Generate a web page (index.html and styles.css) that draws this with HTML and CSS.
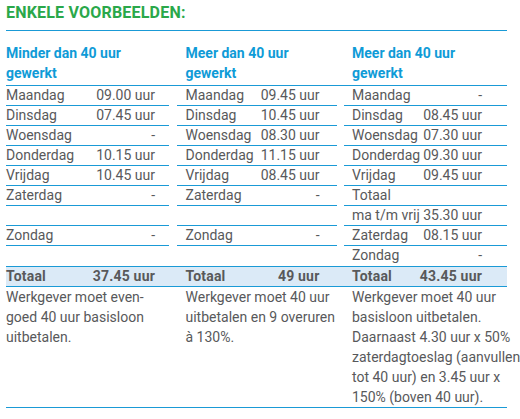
FILE: index.html
```html
<!DOCTYPE html>
<html lang="nl">
<head>
<meta charset="utf-8">
<title>Enkele voorbeelden</title>
<link rel="stylesheet" href="styles.css">
</head>
<body>
<div class="page">
  <h1 class="title">ENKELE VOORBEELDEN:</h1>
  <div class="table">
    <div class="thead grid">
      <div class="th c1">Minder dan 40 uur<br>gewerkt</div>
      <div class="th c2">Meer dan 40 uur<br>gewerkt</div>
      <div class="th c3">Meer dan 40 uur<br>gewerkt</div>
    </div>
    <div class="tbody grid">
      <div class="col c1">
        <div class="row"><span>Maandag</span><span>09.00 uur</span></div>
        <div class="row"><span>Dinsdag</span><span>07.45 uur</span></div>
        <div class="row"><span>Woensdag</span><span>-</span></div>
        <div class="row"><span>Donderdag</span><span>10.15 uur</span></div>
        <div class="row"><span>Vrijdag</span><span>10.45 uur</span></div>
        <div class="row"><span>Zaterdag</span><span>-</span></div>
        <div class="row"><span></span><span></span></div>
        <div class="row"><span>Zondag</span><span>-</span></div>
      </div>
      <div class="col c2">
        <div class="row"><span>Maandag</span><span>09.45 uur</span></div>
        <div class="row"><span>Dinsdag</span><span>10.45 uur</span></div>
        <div class="row"><span>Woensdag</span><span>08.30 uur</span></div>
        <div class="row"><span>Donderdag</span><span>11.15 uur</span></div>
        <div class="row"><span>Vrijdag</span><span>08.45 uur</span></div>
        <div class="row"><span>Zaterdag</span><span>-</span></div>
        <div class="row"><span></span><span></span></div>
        <div class="row"><span>Zondag</span><span>-</span></div>
      </div>
      <div class="col c3">
        <div class="row"><span>Maandag</span><span>-</span></div>
        <div class="row"><span>Dinsdag</span><span>08.45 uur</span></div>
        <div class="row"><span>Woensdag</span><span>07.30 uur</span></div>
        <div class="row"><span>Donderdag</span><span>09.30 uur</span></div>
        <div class="row"><span>Vrijdag</span><span>09.45 uur</span></div>
        <div class="row"><span>Totaal</span><span></span></div>
        <div class="row"><span>ma t/m vrij</span><span>35.30 uur</span></div>
        <div class="row"><span>Zaterdag</span><span>08.15 uur</span></div>
        <div class="row last"><span>Zondag</span><span>-</span></div>
      </div>
    </div>
    <div class="tfoot grid">
      <div class="total c1"><span>Totaal</span><span>37.45 uur</span></div>
      <div class="total c2"><span>Totaal</span><span>49 uur</span></div>
      <div class="total c3"><span>Totaal</span><span>43.45 uur</span></div>
    </div>
    <div class="notes grid">
      <p class="note c1">Werkgever moet even-<br>goed 40 uur basisloon<br>uitbetalen.</p>
      <p class="note c2">Werkgever moet 40 uur<br>uitbetalen en 9 overuren<br>à 130%.</p>
      <p class="note c3">Werkgever moet 40 uur<br>basisloon uitbetalen.<br>Daarnaast 4.30 uur x 50%<br>zaterdagtoeslag (aanvullen<br>tot 40 uur) en 3.45 uur x<br>150% (boven 40 uur).</p>
    </div>
  </div>
</div>
</body>
</html>
```

FILE: styles.css
```css
* { box-sizing: border-box; }

html, body {
  margin: 0;
  padding: 0;
  background: #ffffff;
}

body {
  font-family: Roboto, "Liberation Sans", sans-serif;
  font-size: 14px;
  color: #58595b;
}

.page {
  width: 520px;
  padding: 3px 13px 0 6px;
}

.title {
  margin: 0 0 7px 0;
  font-size: 16px;
  line-height: 20px;
  font-weight: 700;
  color: #2aa84a;
  letter-spacing: 0.2px;
}

.grid {
  display: grid;
  grid-template-columns: 163px 160px 163px;
  column-gap: 7.5px;
}

.thead {
  border-top: 1px solid #1a9ad6;
  border-bottom: 1px solid #1a9ad6;
  padding: 12px 0 2px 0;
}

.th {
  font-weight: 700;
  color: #0f9bd7;
  line-height: 20px;
}

.tbody {
  align-items: start;
  height: 180px;
}

.row {
  display: flex;
  justify-content: space-between;
  height: 20px;
  line-height: 19px;
  border-bottom: 1px solid #1a9ad6;
  white-space: nowrap;
}

.row.last {
  border-bottom: none;
}

.c1 { padding-left: 0; padding-right: 14px; }
.c2 { padding-left: 9px; padding-right: 17px; }
.c3 { padding-left: 8px; padding-right: 25px; }

.th.c1, .th.c2, .th.c3 { padding-right: 0; }

.col.c1, .col.c2, .col.c3 { padding-left: 0; padding-right: 0; }
.col.c1 .row { padding-right: 14px; }
.col.c2 .row { padding-left: 9px; padding-right: 17px; }
.col.c3 .row { padding-left: 8px; padding-right: 25px; }

.tfoot {
  background: #dbeaf7;
  border-top: 1px solid #1a9ad6;
  border-bottom: 1px solid #1a9ad6;
  height: 21px;
  line-height: 19px;
}

.total {
  display: flex;
  justify-content: space-between;
  font-weight: 700;
  letter-spacing: 0.2px;
}

.notes {
  border-bottom: 1px solid #1a9ad6;
  height: 121px;
}

.note {
  margin: 0;
  line-height: 20px;
  white-space: nowrap;
}

.note.c1, .note.c2, .note.c3 { padding-right: 0; }
```
